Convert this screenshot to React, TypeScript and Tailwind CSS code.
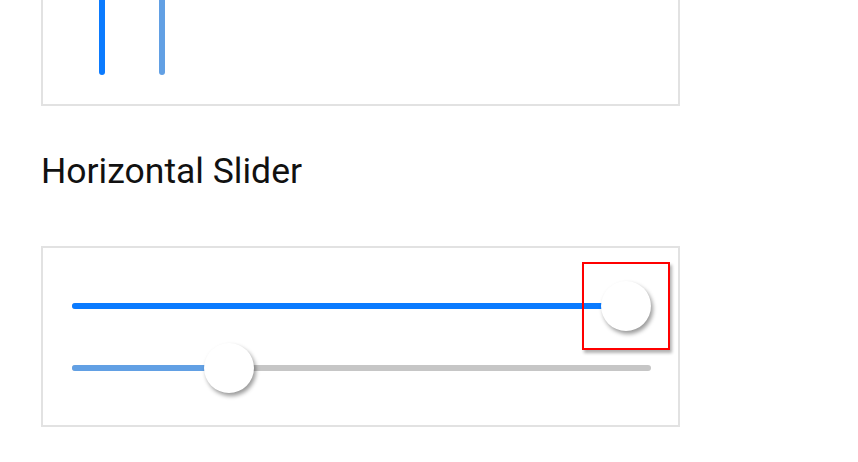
import React from "react";

const BLUE = "bg-[#0b7bff]";

function Track({ value, fill, highlight }: { value: number; fill: string; highlight?: boolean }) {
  // thumb travels inside the track, inset by its radius
  const left = `calc(25px + (100% - 50px) * ${value / 100})`;
  return (
    <div className="relative h-[50px] flex items-center">
      <div className="relative w-full h-[6px] rounded-full bg-[#c6c6c6]">
        <div className={`absolute left-0 top-0 h-full rounded-full ${fill}`} style={{ width: left }} />
      </div>
      <div
        className="absolute top-0 w-[50px] h-[50px] -ml-[25px] rounded-full bg-white shadow-[2px_3px_4px_rgba(0,0,0,0.4)]"
        style={{ left }}
      >
        {highlight && (
          <div className="absolute -inset-[19px] border-2 border-[#ff0000] shadow-[2px_3px_3px_rgba(0,0,0,0.3)]" />
        )}
      </div>
    </div>
  );
}

export default function App() {
  return (
    <div className="min-h-screen bg-white pl-[41px] font-['Roboto',sans-serif] text-[#111]">
      {/* Vertical slider box, scrolled off the top */}
      <div className="w-[639px] h-[106px] border-x-2 border-b-2 border-[#e2e2e2] flex gap-[54px] pl-[56px]">
        <div className={`w-[6px] h-[75px] rounded-b-full ${BLUE}`} />
        <div className="w-[6px] h-[75px] rounded-b-full bg-[#62a0e4]" />
      </div>

      <h2 className="mt-[44px] text-[35.5px] leading-[42px]">Horizontal Slider</h2>

      <div className="mt-[54px] w-[639px] border-2 border-[#e2e2e2] pt-[33px] pb-[32px] pl-[29px] pr-[27px] flex flex-col gap-[12px]">
        <Track value={100} fill={BLUE} highlight />
        <Track value={25} fill="bg-[#62a0e4]" />
      </div>
    </div>
  );
}
